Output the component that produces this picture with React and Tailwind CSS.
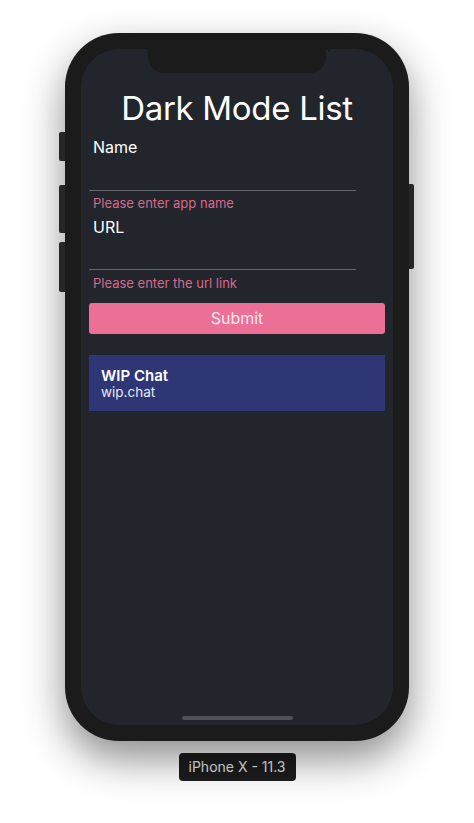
export default function App() {
  const font = { fontFamily: 'Inter, "Noto Sans", sans-serif' };
  return (
    <div className="w-[474px] h-[823px] bg-white flex flex-col items-center pt-[33px]" style={font}>
      <div className="relative w-[344px] h-[708px] rounded-[54px] bg-[#1b1b1b] p-[16px] shadow-[0_18px_40px_rgba(0,0,0,0.45)]">
        {/* side buttons */}
        <div className="absolute left-[-6px] top-[99px] w-[6px] h-[29px] rounded-l-[2px] bg-[#262626]" />
        <div className="absolute left-[-6px] top-[152px] w-[6px] h-[48px] rounded-l-[2px] bg-[#262626]" />
        <div className="absolute left-[-6px] top-[209px] w-[6px] h-[50px] rounded-l-[2px] bg-[#262626]" />
        <div className="absolute right-[-5px] top-[151px] w-[5px] h-[85px] rounded-r-[2px] bg-[#262626]" />

        <div className="relative w-full h-full rounded-[38px] bg-[#22252c] overflow-hidden flex flex-col px-[8px]">
          {/* notch */}
          <div className="absolute left-1/2 -translate-x-1/2 top-0 w-[178px] h-[24px] bg-[#1b1b1b] rounded-b-[16px]" />
          <div className="absolute left-[63px] top-0 w-[6px] h-[6px] bg-[radial-gradient(circle_at_0_100%,transparent_6px,#1b1b1b_6.5px)]" />
          <div className="absolute left-[247px] top-0 w-[6px] h-[6px] bg-[radial-gradient(circle_at_100%_100%,transparent_6px,#1b1b1b_6.5px)]" />

          <div className="mt-[39px] text-center text-white text-[33px] leading-[40px] tracking-[-0.3px]">Dark Mode List</div>

          <div className="mt-[9px] pl-[4px] text-white text-[16px] leading-[20px]">Name</div>
          <div className="h-[34px] mr-[29px] border-b border-[#62666d]" />
          <div className="mt-[4px] pl-[4px] text-[#d9688c] text-[13px] leading-[16px]">Please enter app name</div>

          <div className="mt-[6px] pl-[4px] text-white text-[16px] leading-[20px]">URL</div>
          <div className="h-[33px] mr-[29px] border-b border-[#62666d]" />
          <div className="mt-[5px] pl-[4px] text-[#d9688c] text-[13px] leading-[16px]">Please enter the url link</div>

          <button className="mt-[12px] h-[31px] w-full rounded-[3px] bg-[#ec7096] text-[#fbe7ee] text-[16px] leading-[31px]">Submit</button>

          <div className="mt-[21px] h-[56px] bg-[#2e3676] px-[12px] pt-[12px] flex flex-col">
            <div className="text-white text-[15px] leading-[17px] font-semibold">WIP Chat</div>
            <div className="text-[#e8e9f2] text-[13.5px] leading-[16px]">wip.chat</div>
          </div>

          <div className="mt-auto mb-[5px] self-center w-[111px] h-[4px] rounded-full bg-[#4d5057]" />
        </div>
      </div>
      <div className="mt-[12px] w-[117px] h-[28px] rounded-[4px] bg-[#1c1c1c] text-[#e6e6e6] text-[14px] leading-[28px] text-center">iPhone X - 11.3</div>
    </div>
  );
}
